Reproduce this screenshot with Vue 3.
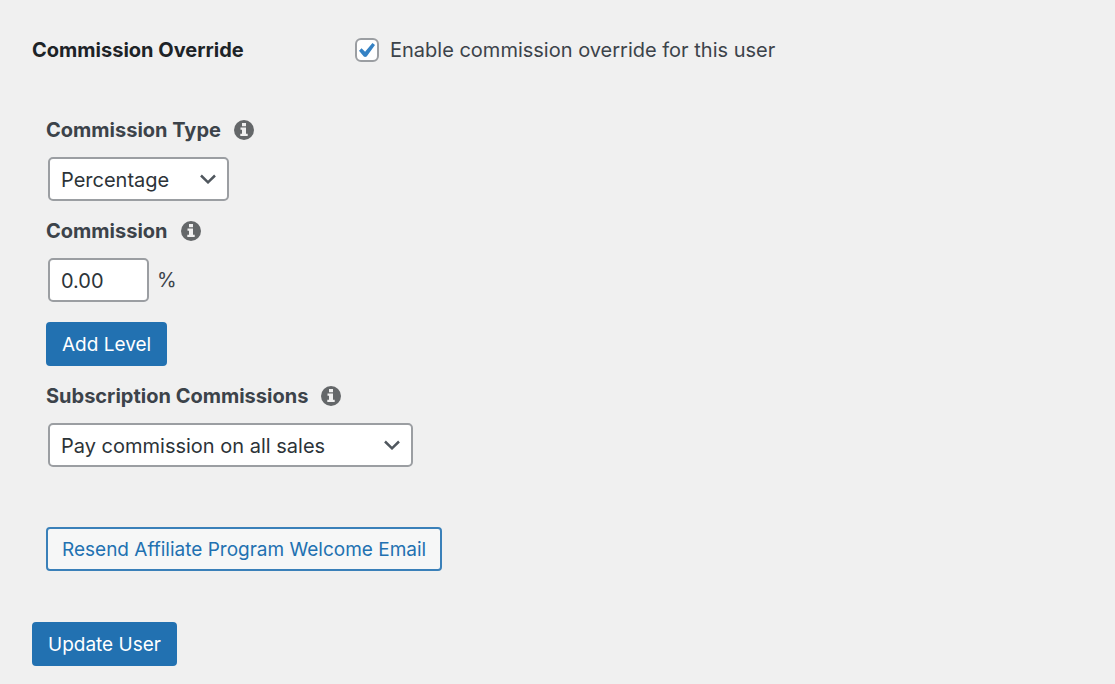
<script setup>
import { ref } from 'vue'

const overrideEnabled = ref(true)
const commissionType = ref('percentage')
const levels = ref(['0.00'])
const subscriptionCommissions = ref('all')

const addLevel = () => {
  levels.value.push('0.00')
}
</script>

<template>
  <form class="profile-form" @submit.prevent>
    <div class="override-row">
      <span id="override-heading" class="row-title">Commission Override</span>
      <label class="override-toggle">
        <input v-model="overrideEnabled" type="checkbox" aria-describedby="override-heading" />
        <span>Enable commission override for this user</span>
      </label>
    </div>

    <div class="override-options">
      <div class="field">
        <div class="field-label">
          <label for="commission-type">Commission Type</label>
          <svg class="info-icon" viewBox="0 0 20 20" aria-hidden="true">
            <circle cx="10" cy="10" r="10" />
            <path d="M8 3h4v3.200H8zM6.500 7.600H12v6.200h1.700V16H6.300v-2.200H8V9.800H6.500z" />
          </svg>
        </div>
        <div class="select-wrap short">
          <select id="commission-type" v-model="commissionType">
            <option value="percentage">Percentage</option>
            <option value="fixed">Fixed Amount</option>
          </select>
          <svg class="chevron" viewBox="0 0 16 10" aria-hidden="true">
            <path d="M1 1.500l7 6.800 7-6.800" />
          </svg>
        </div>
      </div>

      <div class="field">
        <div class="field-label">
          <label for="commission-0">Commission</label>
          <svg class="info-icon" viewBox="0 0 20 20" aria-hidden="true">
            <circle cx="10" cy="10" r="10" />
            <path d="M8 3h4v3.200H8zM6.500 7.600H12v6.200h1.700V16H6.300v-2.200H8V9.800H6.500z" />
          </svg>
        </div>
        <div v-for="(level, i) in levels" :key="i" class="level">
          <input :id="'commission-' + i" v-model="levels[i]" type="text" />
          <span>%</span>
        </div>
      </div>

      <button type="button" class="button primary add-level" @click="addLevel">Add Level</button>

      <div class="field">
        <div class="field-label">
          <label for="subscription-commissions">Subscription Commissions</label>
          <svg class="info-icon" viewBox="0 0 20 20" aria-hidden="true">
            <circle cx="10" cy="10" r="10" />
            <path d="M8 3h4v3.200H8zM6.500 7.600H12v6.200h1.700V16H6.300v-2.200H8V9.800H6.500z" />
          </svg>
        </div>
        <div class="select-wrap long">
          <select id="subscription-commissions" v-model="subscriptionCommissions">
            <option value="all">Pay commission on all sales</option>
            <option value="first">Pay commission on first sale only</option>
          </select>
          <svg class="chevron" viewBox="0 0 16 10" aria-hidden="true">
            <path d="M1 1.500l7 6.800 7-6.800" />
          </svg>
        </div>
      </div>

      <button type="button" class="button resend">Resend Affiliate Program Welcome Email</button>
    </div>

    <button type="submit" class="button primary">Update User</button>
  </form>
</template>

<style>
body {
  background: #f0f0f0;
}
</style>

<style scoped>
.profile-form {
  padding: 36px 32px 18px;
  font-family: Inter, "Liberation Sans", sans-serif;
  font-size: 20px;
  line-height: 28px;
  color: #3c434a;
}

.override-row {
  display: grid;
  grid-template-columns: 323px 1fr;
  align-items: center;
}

.row-title {
  font-weight: 700;
  color: #1d2327;
}

.override-toggle {
  display: flex;
  align-items: center;
  gap: 11px;
}

.override-toggle input {
  appearance: none;
  display: grid;
  place-items: center;
  box-sizing: border-box;
  width: 24px;
  height: 24px;
  margin: 0;
  border: 2px solid #9b9ea2;
  border-radius: 6px;
  background: #fff;
}

.override-toggle input:checked::before {
  content: "";
  width: 16px;
  height: 14px;
  background: #3582c4;
  clip-path: polygon(0 56%, 16% 38%, 38% 62%, 84% 0, 100% 14%, 48% 96%, 38% 100%, 30% 96%);
}

.override-options {
  display: flex;
  flex-direction: column;
  align-items: flex-start;
  padding: 52px 14px 51px;
}

.field {
  margin-bottom: 16px;
}

.field-label {
  display: flex;
  align-items: center;
  gap: 13px;
  margin-bottom: 13px;
  font-weight: 700;
}

.info-icon {
  width: 20px;
  height: 20px;
}

.info-icon circle {
  fill: #646769;
}

.info-icon path {
  fill: #f0f0f0;
}

.select-wrap {
  display: grid;
  align-items: center;
  margin-left: 2px;
}

.short {
  width: 181px;
}

.long {
  width: 365px;
}

select,
.chevron {
  grid-area: 1 / 1;
}

select,
.level input {
  box-sizing: border-box;
  width: 100%;
  height: 44px;
  margin: 0;
  padding: 1px 11px 0;
  border: 2px solid #9b9ea2;
  border-radius: 5px;
  background: #fff;
  color: #2c3338;
  font: inherit;
}

select {
  appearance: none;
}

.chevron {
  justify-self: end;
  width: 16px;
  height: 10px;
  margin-right: 13px;
  fill: none;
  stroke: #50575e;
  stroke-width: 2.500;
  pointer-events: none;
}

.level {
  display: flex;
  align-items: center;
  gap: 8px;
  margin-left: 2px;
}

.level + .level {
  margin-top: 12px;
}

.level input {
  width: 101px;
}

.button {
  box-sizing: border-box;
  height: 44px;
  padding: 2px 14px 0;
  border: 2px solid #3a80b9;
  border-radius: 4px;
  background: #f6f7f7;
  color: #2271b1;
  font: inherit;
  font-size: 19px;
  cursor: pointer;
}

.primary {
  border-color: #2271b1;
  background: #2271b1;
  color: #fff;
}

.add-level {
  margin: 4px 0 16px;
}

.resend {
  margin-top: 44px;
}
</style>
